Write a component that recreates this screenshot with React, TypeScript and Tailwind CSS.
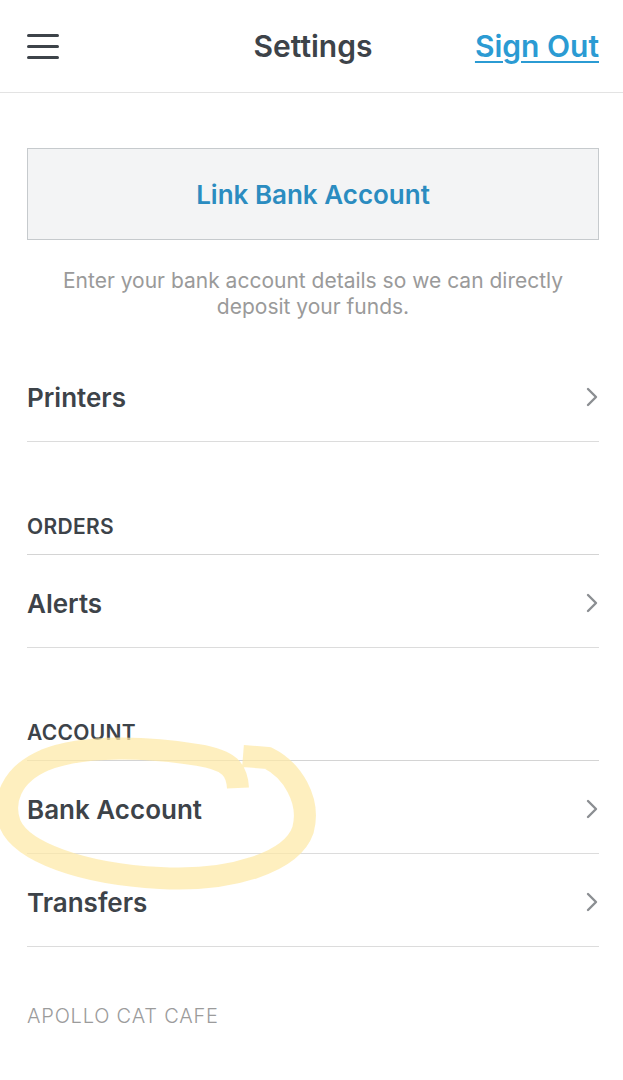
import { ReactNode } from "react";

function Chevron() {
  return (
    <svg width="14" height="20" viewBox="0 0 14 20" fill="none" className="shrink-0">
      <path d="M3 2l8 8-8 8" stroke="#8b8e92" strokeWidth="2.4" strokeLinecap="round" strokeLinejoin="round" />
    </svg>
  );
}

function Row({ label }: { label: string }) {
  return (
    <div className="flex h-[93px] items-center justify-between border-b border-[#dcdcdc] pt-[4px]">
      <span className="text-[26px] font-semibold text-[#3d4349]">{label}</span>
      <Chevron />
    </div>
  );
}

function SectionHeader({ children }: { children: ReactNode }) {
  return (
    <div className="flex h-[113px] items-end border-b border-[#d4d4d4] pb-[17px]">
      <span className="text-[21px] font-semibold uppercase leading-none tracking-[0.3px] text-[#3d4349]">{children}</span>
    </div>
  );
}

export default function App() {
  return (
    <div className="relative min-h-[1080px] w-full bg-white font-['Inter','Liberation_Sans',sans-serif]">
      <header className="grid h-[93px] grid-cols-[1fr_auto_1fr] items-center border-b border-[#e3e3e3] pl-[27px] pr-[24px]">
        <div className="flex w-[32px] flex-col gap-[8px]">
          <span className="block h-[3px] w-full rounded bg-[#3d4349]" />
          <span className="block h-[3px] w-full rounded bg-[#3d4349]" />
          <span className="block h-[3px] w-full rounded bg-[#3d4349]" />
        </div>
        <h1 className="text-[30px] font-semibold text-[#3d4349]">Settings</h1>
        <a className="justify-self-end text-[30px] font-semibold text-[#2b9bd3] underline decoration-2 underline-offset-4">
          Sign Out
        </a>
      </header>

      <main className="pl-[27px] pr-[24px]">
        <button className="mt-[55px] flex h-[92px] w-full items-center justify-center border border-[#c6cacd] bg-[#f3f4f5] text-[26px] font-semibold text-[#2b8cc0]">
          Link Bank Account
        </button>
        <p className="mx-auto mt-[28px] max-w-[530px] text-center text-[21px] leading-[26px] text-[#9a9a9a]">
          Enter your bank account details so we can directly deposit your funds.
        </p>

        <div className="mt-[29px]">
          <Row label="Printers" />
          <SectionHeader>Orders</SectionHeader>
          <Row label="Alerts" />
          <SectionHeader>Account</SectionHeader>
          <Row label="Bank Account" />
          <Row label="Transfers" />
        </div>

        <p className="pt-[54px] text-[20px] font-light uppercase tracking-[0.8px] text-[#9b9b9b]">Apollo Cat Cafe</p>
      </main>

      {/* highlighter scribble round "Bank Account" */}
      <svg className="pointer-events-none absolute left-0 top-[735px]" width="330" height="160" viewBox="0 735 330 160" fill="none">
        <path
          d="M238 788 C237 770 230 760 198 755 C150 747 85 744 45 760 C10 775 2 802 10 824 C22 852 82 874 160 878 C232 882 292 862 303 830 C311 800 292 770 268 758 L243 756"
          stroke="#fde9a6"
          strokeOpacity="0.72"
          strokeWidth="22"
          strokeLinecap="butt"
          strokeLinejoin="round"
        />
      </svg>
    </div>
  );
}
